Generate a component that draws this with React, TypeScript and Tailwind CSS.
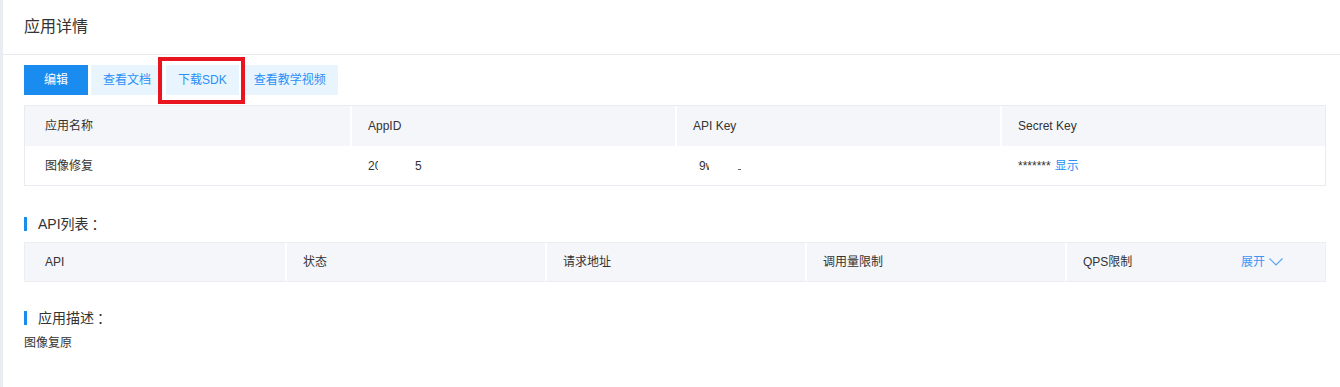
import React from "react";

const font = "font-['Liberation_Sans','Noto_Sans_CJK_SC',sans-serif]";

function SectionTitle({ label }: { label: string }) {
  return (
    <div className="flex h-5 items-center">
      <div className="h-[14px] w-[3px] bg-[#1a8cf0]" />
      <div className="ml-[11px] text-[14px] leading-5 text-[#333]">
        {label}
        <span className="ml-[3px]">：</span>
      </div>
    </div>
  );
}

export default function App() {
  return (
    <div className={`${font} relative flex h-[387px] w-[1340px] bg-white text-[12px] text-[#333]`}>
      <div className="w-[3px] shrink-0 bg-[#e9ecf3]" />
      <div className="flex flex-1 flex-col">
        {/* header */}
        <div className="flex h-[55px] items-center border-b border-[#e8e9ec] pl-[21px]">
          <span className="text-[16px] leading-6 text-[#333]">应用详情</span>
        </div>

        <div className="flex flex-col pl-[21px] pr-[14px]">
          {/* buttons */}
          <div className="mt-[10px] flex h-[30px] gap-[3px]">
            <div className="flex w-16 items-center justify-center bg-[#1a8cf0] text-white">编辑</div>
            <div className="flex items-center bg-[#e8f4fe] px-3 text-[#2a8ff7]">查看文档</div>
            <div className="flex items-center bg-[#e8f4fe] px-3 text-[#2a8ff7]">下载SDK</div>
            <div className="flex items-center bg-[#e8f4fe] px-3 text-[#2a8ff7]">查看教学视频</div>
          </div>

          {/* app table */}
          <div className="mt-[10px] border border-[#e9ebf0]">
            <div className="grid h-10 grid-cols-4 bg-[#f5f6fa]">
              <div className="flex items-center pl-5">应用名称</div>
              <div className="flex items-center border-l-2 border-white pl-4">AppID</div>
              <div className="flex items-center border-l-2 border-white pl-4">API Key</div>
              <div className="flex items-center border-l-2 border-white pl-4">Secret Key</div>
            </div>
            <div className="grid h-[39px] grid-cols-4 bg-white">
              <div className="flex items-center pl-5">图像修复</div>
              <div className="flex items-center pl-[18px]">
                <span className="inline-block w-[10px] overflow-hidden whitespace-nowrap">20</span>
                <span className="ml-[37px]">5</span>
              </div>
              <div className="flex items-center pl-[24px]">
                <span className="inline-block w-[10px] overflow-hidden whitespace-nowrap">9w</span>
                <span className="ml-[29px] mt-[8px] inline-block h-[1px] w-[3px] bg-[#666]" />
              </div>
              <div className="flex items-center pl-[18px]">
                <span>*******</span>
                <span className="ml-[4px] text-[#2a8ff7]">显示</span>
              </div>
            </div>
          </div>

          {/* API list */}
          <div className="mt-[28px]">
            <SectionTitle label="API列表" />
          </div>
          <div className="mt-[8px] border border-[#eceef3]">
            <div className="grid h-[38px] grid-cols-5 bg-[#f5f6fa]">
              <div className="flex items-center pl-5">API</div>
              <div className="flex items-center border-l-2 border-white pl-4">状态</div>
              <div className="flex items-center border-l-2 border-white pl-4">请求地址</div>
              <div className="flex items-center border-l-2 border-white pl-4">调用量限制</div>
              <div className="flex items-center justify-between border-l-2 border-white pl-4 pr-[42px]">
                <span>QPS限制</span>
                <span className="flex items-center text-[#3c95f5]">
                  展开
                  <svg className="ml-[4px]" width="14" height="8" viewBox="0 0 14 8" fill="none">
                    <polyline points="0.5,0.5 7,7 13.5,0.5" stroke="#5aa5f5" strokeWidth="1.2" />
                  </svg>
                </span>
              </div>
            </div>
          </div>

          {/* description */}
          <div className="mt-[26px]">
            <SectionTitle label="应用描述" />
          </div>
          <div className="mt-[6px] leading-[18px] text-[#333]">图像复原</div>
        </div>
      </div>

      {/* red annotation box */}
      <div className="absolute left-[158px] top-[57px] h-[47px] w-[87px] border-4 border-[#e8141f]" />
    </div>
  );
}
